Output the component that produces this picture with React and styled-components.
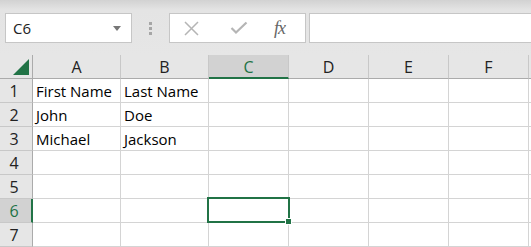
import React from 'react'
import styled, { createGlobalStyle } from 'styled-components'

const Global = createGlobalStyle`
  html, body { margin: 0; padding: 0; background: #ffffff; overflow: hidden; }
  body { font-family: "Open Sans", "Liberation Sans", sans-serif; }
`

const Page = styled.div`
  width: 531px;
  height: 247px;
  overflow: hidden;
  background: #fff;
`

const Bar = styled.div`
  height: 55px;
  box-sizing: border-box;
  display: flex;
  align-items: flex-start;
  padding: 13px 0 0 5px;
  background: linear-gradient(#d2d2d2 0px, #e4e4e4 10px, #e6e6e6 100%);
`

const NameBox = styled.div`
  width: 127px;
  height: 30px;
  box-sizing: border-box;
  border: 1px solid #c6c6c6;
  background: #fff;
  display: flex;
  align-items: center;
  justify-content: space-between;
  padding: 0 10px 0 7px;
  font-size: 15px;
  color: #222;
`

const Caret = styled.span`
  width: 0;
  height: 0;
  border-left: 4px solid transparent;
  border-right: 4px solid transparent;
  border-top: 5px solid #777;
`

const Grip = styled.div`
  width: 37px;
  height: 30px;
  display: flex;
  flex-direction: column;
  align-items: center;
  justify-content: center;
  gap: 2px;
  span {
    width: 3px;
    height: 3px;
    background: #a6a6a6;
  }
`

const FxBox = styled.div`
  width: 137px;
  height: 30px;
  box-sizing: border-box;
  border: 1px solid #c6c6c6;
  background: #fff;
  display: flex;
  align-items: center;
  padding-left: 14px;
`

const FxText = styled.span`
  margin-left: 26px;
  font-family: "Liberation Serif", "DejaVu Serif", serif;
  font-style: italic;
  font-size: 18px;
  color: #666;
  letter-spacing: -1px;
`

const Input = styled.div`
  flex: 1;
  height: 30px;
  margin-left: 3px;
  box-sizing: border-box;
  border: 1px solid #c6c6c6;
  border-right: none;
  background: #fff;
`

const Grid = styled.div`
  display: grid;
  grid-template-columns: 33px 88px 88px 80px 80px 80px 80px 20px;
  grid-auto-rows: 24px;
`

const Corner = styled.div`
  background: #e6e6e6;
  border-right: 1px solid #ababab;
  border-bottom: 1px solid #ababab;
  display: flex;
  align-items: flex-end;
  justify-content: flex-end;
  padding: 0 3px 3px 0;
  box-sizing: border-box;
`

const ColHead = styled.div`
  background: ${p => (p.$active ? '#d2d2d2' : '#e6e6e6')};
  color: ${p => (p.$active ? '#217346' : '#222')};
  border-right: 1px solid #c8c8c8;
  border-bottom: ${p => (p.$active ? '2px solid #217346' : '1px solid #ababab')};
  box-sizing: border-box;
  display: flex;
  align-items: center;
  justify-content: center;
  font-size: 16px;
  padding-top: ${p => (p.$active ? '1px' : '0')};
`

const RowHead = styled.div`
  background: ${p => (p.$active ? '#d2d2d2' : '#e6e6e6')};
  color: ${p => (p.$active ? '#217346' : '#222')};
  border-right: ${p => (p.$active ? '2px solid #217346' : '1px solid #ababab')};
  border-bottom: 1px solid #c8c8c8;
  box-sizing: border-box;
  display: flex;
  align-items: center;
  justify-content: center;
  font-size: 16px;
  padding-right: ${p => (p.$active ? '3px' : '4px')};
`

const Cell = styled.div`
  position: relative;
  border-right: 1px solid #d4d4d4;
  border-bottom: 1px solid #d4d4d4;
  box-sizing: border-box;
  display: flex;
  align-items: center;
  padding-left: 3px;
  font-size: 15px;
  color: #000;
  white-space: nowrap;

  ${p => p.$selected && `
    &::after {
      content: '';
      position: absolute;
      top: -2px;
      left: -2px;
      right: -2px;
      bottom: -1px;
      border: 2px solid #217346;
      z-index: 2;
    }
    &::before {
      content: '';
      position: absolute;
      right: -4px;
      bottom: -3px;
      width: 5px;
      height: 5px;
      background: #217346;
      border: 1px solid #fff;
      z-index: 3;
    }
  `}
`

const cols = ['A', 'B', 'C', 'D', 'E', 'F', '']
const data = [
  ['First Name', 'Last Name'],
  ['John', 'Doe'],
  ['Michael', 'Jackson'],
  [],
  [],
  [],
  [],
]

export default function App() {
  return (
    <Page>
      <Global />
      <Bar>
        <NameBox>
          <span>C6</span>
          <Caret />
        </NameBox>
        <Grip>
          <span />
          <span />
          <span />
        </Grip>
        <FxBox>
          <svg width="15" height="15" viewBox="0 0 15 15">
            <path d="M1 1 L14 14 M14 1 L1 14" stroke="#b5b5b5" strokeWidth="1.5" fill="none" />
          </svg>
          <svg width="18" height="14" viewBox="0 0 18 14" style={{ marginLeft: 31 }}>
            <path d="M1.5 7 L6 11.5 L16.5 1.5" stroke="#b5b5b5" strokeWidth="2.2" fill="none" />
          </svg>
          <FxText>fx</FxText>
        </FxBox>
        <Input />
      </Bar>
      <Grid>
        <Corner>
          <svg width="16" height="16" viewBox="0 0 16 16">
            <path d="M16 0 L16 16 L0 16 Z" fill="#217346" />
          </svg>
        </Corner>
        {cols.map((c, i) => (
          <ColHead key={i} $active={c === 'C'}>{c}</ColHead>
        ))}
        {data.map((row, r) => (
          <React.Fragment key={r}>
            <RowHead $active={r === 5}>{r + 1}</RowHead>
            {cols.map((c, ci) => (
              <Cell key={ci} $selected={r === 5 && c === 'C'}>{row[ci] || ''}</Cell>
            ))}
          </React.Fragment>
        ))}
      </Grid>
    </Page>
  )
}
